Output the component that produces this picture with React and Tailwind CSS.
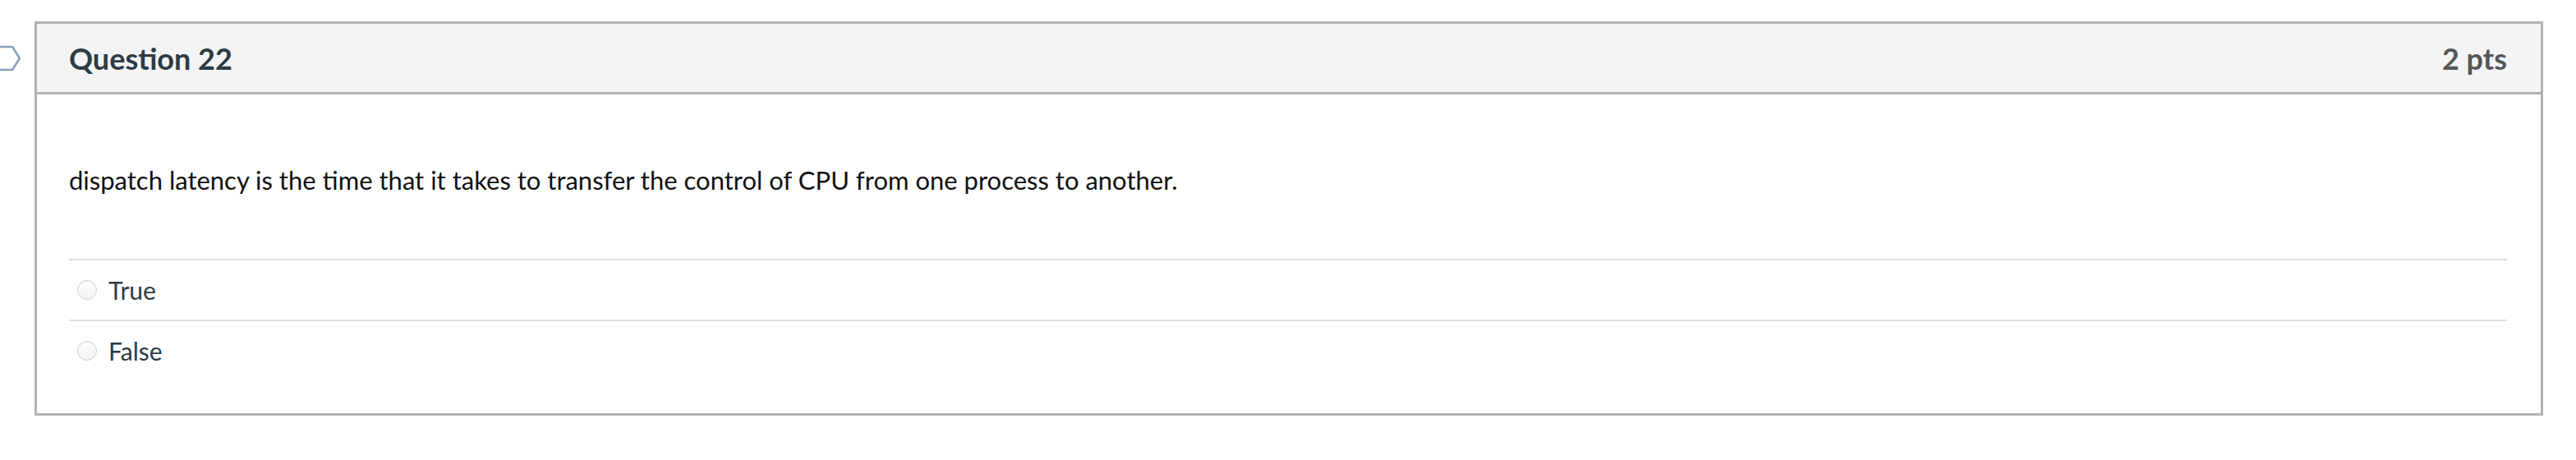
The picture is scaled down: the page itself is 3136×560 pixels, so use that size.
export default function App() {
  const answers = ["True", "False"];

  return (
    <div
      className="w-full h-[560px] bg-white pt-[26px] pl-[42px] pr-[40px]"
      style={{ fontFamily: "Lato, 'Open Sans', sans-serif" }}
    >
      <div className="relative border-[3px] border-[#b2b2b2] bg-white">
        {/* flag marker */}
        <svg
          className="absolute left-[-51px] top-[26px]"
          width="34"
          height="34"
          viewBox="0 0 34 34"
          fill="none"
        >
          <path
            d="M-2 2 H21 L30 16 L21 30 H-2"
            stroke="#86a0bb"
            strokeWidth="2.5"
            strokeLinejoin="round"
          />
        </svg>

        {/* Header */}
        <div className="h-[86px] bg-[#f4f4f4] border-b-[3px] border-[#b2b2b2] flex items-center justify-between pl-[39px] pr-[41px]">
          <h2 className="text-[36px] font-bold text-[#2d3b45] leading-none">
            Question 22
          </h2>
          <span className="text-[36px] font-bold text-[#575757] leading-none">
            2 pts
          </span>
        </div>

        {/* Body */}
        <div className="pl-[39px] pr-[41px] pt-[80px] pb-[40px]">
          <p className="text-[31px] leading-[48px] text-[#111]">
            dispatch latency is the time that it takes to transfer the control of CPU from one process to another.
          </p>

          <div className="mt-[72px]">
            {answers.map((a) => (
              <div
                key={a}
                className="h-[74px] border-t-2 border-[#dedede] flex items-center"
              >
                <span className="ml-[10px] w-[24px] h-[24px] rounded-full border border-[#cfcfcf] bg-gradient-to-b from-white to-[#f3f3f3] shadow-[inset_0_1px_2px_rgba(0,0,0,0.06)]" />
                <span className="ml-[14px] text-[30px] leading-[36px] text-[#2d3b45]">
                  {a}
                </span>
              </div>
            ))}
          </div>
        </div>
      </div>
    </div>
  );
}
